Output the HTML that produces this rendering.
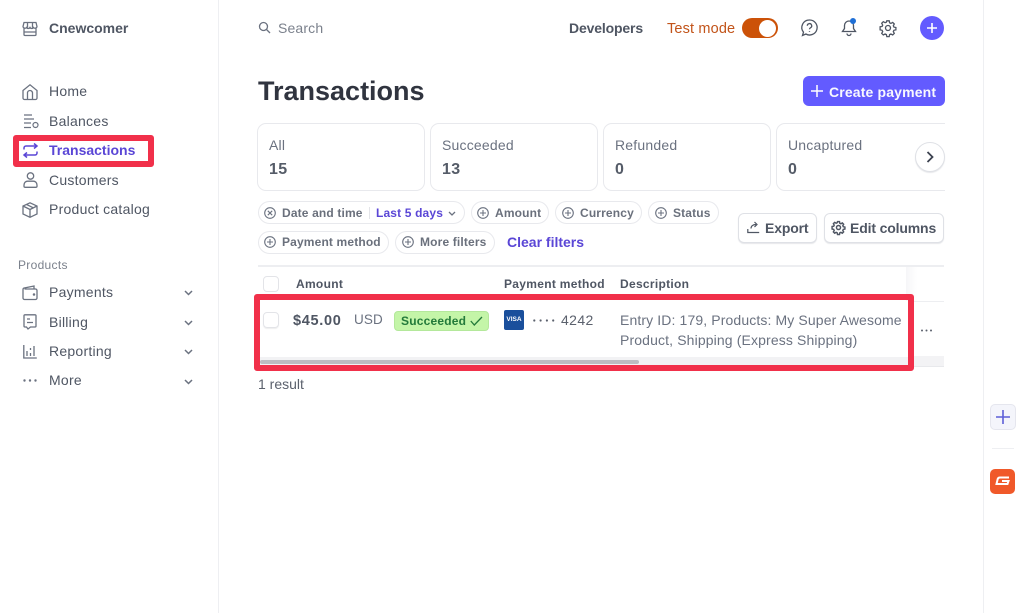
<!DOCTYPE html>
<html><head><meta charset="utf-8"><title>Transactions</title>
<style>
html,body{margin:0;padding:0;background:#fff;width:1024px;height:613px;overflow:hidden}
body{position:relative;font-family:"Liberation Sans",sans-serif;color:#4f566b}
.t{position:absolute;white-space:nowrap;line-height:18px;height:18px}
.b{position:absolute;box-sizing:border-box}
svg{position:absolute;overflow:visible;fill:none}
.nav{font-size:14px;color:#4f5663;letter-spacing:.25px}
.card{position:absolute;box-sizing:border-box;top:123px;height:68px;border:1.5px solid #e8e9ed;border-radius:9px;background:#fff}
.cl{font-size:14px;color:#6b7280;letter-spacing:.2px}
.cn{font-size:16px;font-weight:bold;color:#555c68;letter-spacing:.3px}
.pill{position:absolute;box-sizing:border-box;height:23px;border:1.5px solid #e8e9ed;border-radius:12px;background:#fff}
.f{font-size:12px;font-weight:bold;color:#6a707c;letter-spacing:.15px}
.th{font-size:12px;font-weight:bold;color:#4f5663;letter-spacing:.3px}
.btn{position:absolute;box-sizing:border-box;height:30px;top:213px;border:1.5px solid #dfe1e6;border-radius:6px;background:#fff;box-shadow:0 1px 1px #e6e7ea}
</style></head><body>
<div class="b" style="left:218px;top:0;width:1px;height:613px;background:#eeeff2"></div>
<div class="b" style="left:983px;top:0;width:1px;height:613px;background:#eeeff2"></div>

<svg style="left:22px;top:20px" width="16" height="17" viewBox="0 0 16 17" stroke="#6b7280" stroke-width="1.3"><path d="M2 2.500h12l1 4a2 2 0 0 1-3.500 1 2 2 0 0 1-3.500 0 2 2 0 0 1-3.500 0A2 2 0 0 1 1 6.500zM2 8v6.500a1 1 0 0 0 1 1h10a1 1 0 0 0 1-1V8M5.500 2.500v5M10.500 2.500v5M2 12h12"/></svg>
<div class="t" style="left:49px;top:19px;font-size:14px;font-weight:bold;color:#4f5663;letter-spacing:0">Cnewcomer</div>

<svg style="left:22px;top:84px" width="16" height="16" viewBox="0 0 16 16" stroke="#6b7280" stroke-width="1.300"><path d="M1 6.500 8 .8l7 5.700V14a1.500 1.500 0 0 1-1.500 1.500h-11A1.500 1.500 0 0 1 1 14zM5.500 15.500V9a2.500 2.500 0 0 1 5 0v6.500"/></svg>
<div class="t nav" style="left:49px;top:82px">Home</div>
<svg style="left:23px;top:114px" width="16" height="15" viewBox="0 0 16 15" stroke="#6b7280" stroke-width="1.200"><path d="M1 1h8M1 5h10M1 9h7M1 13.500h7"/><circle cx="12.500" cy="11" r="2.500"/></svg>
<div class="t nav" style="left:49px;top:112px">Balances</div>

<div class="b" style="left:13px;top:135px;width:141px;height:32px;border:6px solid #f1304a;border-radius:3px"></div>
<svg style="left:23px;top:143px" width="15" height="15" viewBox="0 0 15 15" stroke="#5a46d6" stroke-width="1.500"><path d="M1 6.500V5a2 2 0 0 1 2-2h11M11 .5 14 3l-3 2.500M14 8.500V10a2 2 0 0 1-2 2H1M4 9.500 1 12l3 2.500"/></svg>
<div class="t" style="left:49px;top:141px;font-size:14px;font-weight:bold;color:#5a46d6;letter-spacing:0">Transactions</div>

<svg style="left:23px;top:172px" width="15" height="16" viewBox="0 0 15 16" stroke="#6b7280" stroke-width="1.300"><circle cx="7.500" cy="4" r="3.200"/><path d="M1 13c0-2.500 2-3.800 3.500-3.800h6c1.500 0 3.500 1.300 3.500 3.800v1.300a1 1 0 0 1-1 1H2a1 1 0 0 1-1-1z"/></svg>
<div class="t nav" style="left:49px;top:171px">Customers</div>
<svg style="left:22px;top:202px" width="16" height="16" viewBox="0 0 16 16" stroke="#6b7280" stroke-width="1.300"><path d="M8 .8 15 4v8l-7 3.300L1 12V4zM1 4l7 3.500L15 4M8 7.500v7.800M4.500 2.400l7 3.500"/></svg>
<div class="t nav" style="left:49px;top:200px">Product catalog</div>

<div class="t" style="left:18px;top:256px;font-size:12px;color:#7b818c;letter-spacing:.3px">Products</div>
<svg style="left:22px;top:285px" width="16" height="15" viewBox="0 0 16 15" stroke="#6b7280" stroke-width="1.300"><path d="M1 4.500V13a1.500 1.500 0 0 0 1.500 1.500h11A1.500 1.500 0 0 0 15 13V5.500A1.500 1.500 0 0 0 13.500 4H2.500M1 4.500a1.500 1.500 0 0 1 1.200-1.500L12 1v3"/><circle cx="12" cy="9.500" r=".6"/></svg>
<div class="t nav" style="left:49px;top:283px">Payments</div>
<svg style="left:23px;top:314px" width="14" height="16" viewBox="0 0 14 16" stroke="#6b7280" stroke-width="1.300"><path d="M1 1.500A.8.800 0 0 1 1.800.8h10.400a.8.800 0 0 1 .8.700v10.500a1 1 0 0 1-1 1H7.500L5 15 3.500 13H2a1 1 0 0 1-1-1zM4 5h3M4 8.500h6"/></svg>
<div class="t nav" style="left:49px;top:313px">Billing</div>
<svg style="left:23px;top:344px" width="14" height="15" viewBox="0 0 14 15" stroke="#6b7280" stroke-width="1.300"><path d="M.8 1v13h13M4 7v5M7.500 9v3M7.500 4v2M11 2v10"/></svg>
<div class="t nav" style="left:49px;top:342px">Reporting</div>
<svg style="left:23px;top:379px" width="14" height="3" viewBox="0 0 14 3"><circle cx="1.500" cy="1.500" r="1.200" fill="#6b7280"/><circle cx="7" cy="1.500" r="1.200" fill="#6b7280"/><circle cx="12.500" cy="1.500" r="1.200" fill="#6b7280"/></svg>
<div class="t nav" style="left:49px;top:371px">More</div>
<svg style="left:184px;top:290px" width="9" height="6" stroke="#6b7280" stroke-width="1.500"><path d="M1 1l3.500 3.500L8 1"/></svg>
<svg style="left:184px;top:320px" width="9" height="6" stroke="#6b7280" stroke-width="1.500"><path d="M1 1l3.500 3.500L8 1"/></svg>
<svg style="left:184px;top:349px" width="9" height="6" stroke="#6b7280" stroke-width="1.500"><path d="M1 1l3.500 3.500L8 1"/></svg>
<svg style="left:184px;top:379px" width="9" height="6" stroke="#6b7280" stroke-width="1.500"><path d="M1 1l3.500 3.500L8 1"/></svg>

<svg style="left:258px;top:21px" width="13" height="13" viewBox="0 0 13 13" stroke="#6b7280" stroke-width="1.300"><circle cx="5.500" cy="5.500" r="4"/><path d="M8.500 8.500 12 12"/></svg>
<div class="t" style="left:278px;top:19px;font-size:14px;color:#7b818c;letter-spacing:.15px">Search</div>
<div class="t" style="left:569px;top:19px;font-size:14px;font-weight:bold;color:#4f5663;letter-spacing:-.15px">Developers</div>
<div class="t" style="left:667px;top:20px;font-size:14.500px;color:#c2541a;letter-spacing:.15px">Test mode</div>
<div class="b" style="left:742px;top:18px;width:36px;height:20px;border-radius:10px;background:#cc5208"></div>
<div class="b" style="left:759px;top:19.500px;width:17px;height:17px;border-radius:50%;background:#fff"></div>
<svg style="left:801px;top:19px" width="17" height="18" viewBox="0 0 17 18" stroke="#4f5663" stroke-width="1.300"><path d="M8.500 1a7.500 7.500 0 1 1-3.600 14L1.500 16.500l1-3.300A7.500 7.500 0 0 1 8.500 1z"/><path d="M6.300 6.800a2.200 2.200 0 1 1 3.300 1.900c-.7.400-1.100.8-1.100 1.600M8.500 12v.8"/></svg>
<svg style="left:841px;top:18px" width="17" height="18" viewBox="0 0 17 18" stroke="#4f5663" stroke-width="1.300"><path d="M8 3a4.500 4.500 0 0 0-4.500 4.500v3L1.500 13.500h13l-2-3v-3A4.500 4.500 0 0 0 8 3zM6 15.500a2 2 0 0 0 4 0"/></svg>
<div class="b" style="left:850px;top:18px;width:6px;height:6px;border-radius:50%;background:#1f6fd6"></div>
<svg style="left:880px;top:20px" width="16" height="16" viewBox="0 0 16 16" stroke="#4f5663" stroke-width="1.300"><circle cx="8" cy="8" r="2.500"/><path d="M6.800.8h2.400l.4 2 1.300.6 1.800-1 1.600 1.600-1 1.800.6 1.300 2 .4v2.400l-2 .4-.6 1.300 1 1.800-1.600 1.600-1.800-1-1.300.6-.4 2H6.800l-.4-2-1.300-.6-1.800 1-1.600-1.600 1-1.800-.6-1.300-2-.4V6.800l2-.4.600-1.300-1-1.800 1.600-1.600 1.800 1 1.300-.6z"/></svg>
<div class="b" style="left:920px;top:16px;width:24px;height:24px;border-radius:50%;background:#635bff"></div>
<svg style="left:926px;top:22px" width="12" height="12" stroke="#fff" stroke-width="1.600"><path d="M6 1v10M1 6h10"/></svg>

<div class="t" style="left:258px;top:74px;height:34px;line-height:34px;font-size:27px;font-weight:bold;color:#30343f;letter-spacing:0">Transactions</div>
<div class="b" style="left:803px;top:76px;width:142px;height:30px;border-radius:6px;background:#635bff"></div>
<svg style="left:811px;top:85px" width="12" height="12" stroke="#fff" stroke-width="1.500"><path d="M6 0v12M0 6h12"/></svg>
<div class="t" style="left:829px;top:83px;font-size:14px;font-weight:bold;color:#fff;letter-spacing:.15px;opacity:.96">Create payment</div>

<div class="card" style="left:257px;width:168px"></div>
<div class="t cl" style="left:269px;top:136px">All</div><div class="t cn" style="left:269px;top:161px">15</div>
<div class="card" style="left:430px;width:168px"></div>
<div class="t cl" style="left:442px;top:136px">Succeeded</div><div class="t cn" style="left:442px;top:161px">13</div>
<div class="card" style="left:603px;width:168px"></div>
<div class="t cl" style="left:615px;top:136px">Refunded</div><div class="t cn" style="left:615px;top:161px">0</div>
<div class="card" style="left:776px;width:190px"></div>
<div class="t cl" style="left:788px;top:136px">Uncaptured</div><div class="t cn" style="left:788px;top:161px">0</div>
<div class="b" style="left:945px;top:110px;width:38px;height:90px;background:#fff"></div>
<div class="b" style="left:915px;top:142px;width:30px;height:30px;border-radius:50%;background:#fff;border:1.500px solid #dfe1e6;box-shadow:0 1px 1px #e6e7ea"></div>
<svg style="left:926px;top:151px" width="8" height="12" stroke="#3c4250" stroke-width="1.800"><path d="M1.500 1l5 5-5 5"/></svg>

<div class="pill" style="left:258px;top:201px;width:207px"></div>
<svg style="left:264px;top:207px" width="12" height="12" stroke="#6b7280" stroke-width="1.100"><circle cx="6" cy="6" r="5.300"/><path d="M3.800 3.800l4.400 4.400M8.200 3.800 3.800 8.200"/></svg>
<div class="t f" style="left:282px;top:204px">Date and time</div>
<div class="b" style="left:369px;top:207px;width:1px;height:12px;background:#e3e4e8"></div>
<div class="t f" style="left:376px;top:204px;color:#5a46d6">Last 5 days</div>
<svg style="left:448px;top:211px" width="8" height="5" stroke="#6b7280" stroke-width="1.300"><path d="M1 1l3 3 3-3"/></svg>

<div class="pill" style="left:471px;top:201px;width:78px"></div>
<svg style="left:477px;top:207px" width="12" height="12" stroke="#6b7280" stroke-width="1.100"><circle cx="6" cy="6" r="5.300"/><path d="M6 3v6M3 6h6"/></svg>
<div class="t f" style="left:495px;top:204px">Amount</div>
<div class="pill" style="left:555px;top:201px;width:87px"></div>
<svg style="left:562px;top:207px" width="12" height="12" stroke="#6b7280" stroke-width="1.100"><circle cx="6" cy="6" r="5.300"/><path d="M6 3v6M3 6h6"/></svg>
<div class="t f" style="left:580px;top:204px">Currency</div>
<div class="pill" style="left:648px;top:201px;width:71px"></div>
<svg style="left:655px;top:207px" width="12" height="12" stroke="#6b7280" stroke-width="1.100"><circle cx="6" cy="6" r="5.300"/><path d="M6 3v6M3 6h6"/></svg>
<div class="t f" style="left:673px;top:204px">Status</div>
<div class="pill" style="left:258px;top:231px;width:131px"></div>
<svg style="left:264px;top:236px" width="12" height="12" stroke="#6b7280" stroke-width="1.100"><circle cx="6" cy="6" r="5.300"/><path d="M6 3v6M3 6h6"/></svg>
<div class="t f" style="left:282px;top:233px">Payment method</div>
<div class="pill" style="left:395px;top:231px;width:100px"></div>
<svg style="left:402px;top:236px" width="12" height="12" stroke="#6b7280" stroke-width="1.100"><circle cx="6" cy="6" r="5.300"/><path d="M6 3v6M3 6h6"/></svg>
<div class="t f" style="left:420px;top:233px">More filters</div>
<div class="t" style="left:507px;top:233px;font-size:14px;font-weight:bold;color:#5a46d6;letter-spacing:0">Clear filters</div>

<div class="btn" style="left:738px;width:79px"></div>
<svg style="left:747px;top:221px" width="13" height="13" viewBox="0 0 13 13" stroke="#4f5663" stroke-width="1.200"><path d="M.8 8v3.500h11.400M4 7.500c0-2.500 2-4 5-4M7.500 1 10 3.500 7.500 6"/></svg>
<div class="t" style="left:765px;top:219px;font-size:14px;font-weight:bold;color:#4f5663;letter-spacing:-.15px">Export</div>
<div class="btn" style="left:824px;width:120px"></div>
<svg style="left:832px;top:221px" width="13" height="13" viewBox="0 0 16 16" stroke="#4f5663" stroke-width="1.800"><circle cx="8" cy="8" r="2.500"/><path d="M6.800.8h2.400l.4 2 1.300.6 1.800-1 1.600 1.600-1 1.800.6 1.300 2 .4v2.400l-2 .4-.6 1.300 1 1.800-1.600 1.600-1.800-1-1.300.6-.4 2H6.800l-.4-2-1.300-.6-1.800 1-1.600-1.600 1-1.800-.6-1.300-2-.4V6.800l2-.4.600-1.300-1-1.800 1.600-1.600 1.800 1 1.300-.6z"/></svg>
<div class="t" style="left:850px;top:219px;font-size:14px;font-weight:bold;color:#4f5663;letter-spacing:-.15px">Edit columns</div>

<div class="b" style="left:258px;top:265px;width:686px;height:2px;background:#edeef1"></div>
<div class="b" style="left:906px;top:267px;width:38px;height:34px;background:linear-gradient(90deg,#f6f6f8,#fff 30%)"></div>
<div class="b" style="left:263px;top:276px;width:16px;height:16px;border:1.500px solid #e3e4e8;border-radius:4px"></div>
<div class="t th" style="left:296px;top:275px">Amount</div>
<div class="t th" style="left:504px;top:275px">Payment method</div>
<div class="t th" style="left:620px;top:275px">Description</div>

<div class="b" style="left:914px;top:301px;width:30px;height:1px;background:#edeef1"></div>
<div class="b" style="left:263px;top:312px;width:16px;height:16px;border:1.500px solid #e3e4e8;border-radius:4px;box-shadow:0 1px 1px #eee"></div>
<div class="t" style="left:293px;top:312px;font-size:14.500px;font-weight:bold;color:#4f5663;letter-spacing:.7px">$45.00</div>
<div class="t" style="left:354px;top:311px;font-size:13.500px;color:#6b7280;letter-spacing:.1px">USD</div>
<div class="b" style="left:394px;top:311px;width:95px;height:20px;border-radius:4px;background:#c4f5a8;border:1px solid #b4e89b"></div>
<div class="t" style="left:401px;top:312px;font-size:12px;font-weight:bold;color:#237a3a;letter-spacing:.2px">Succeeded</div>
<svg style="left:470px;top:316px" width="13" height="10" stroke="#237a3a" stroke-width="1.300"><path d="M.8 5l3.500 4L12 1"/></svg>
<div class="b" style="left:504px;top:310px;width:20px;height:20px;border-radius:2px;background:#1a4f9c"></div>
<div class="t" style="left:504px;top:311px;width:20px;text-align:center;font-size:6.500px;font-weight:bold;color:#fff">VISA</div>
<svg style="left:533px;top:319px" width="24" height="3" viewBox="0 0 24 3"><circle cx="1.300" cy="1.500" r="1.100" fill="#5b616d"/><circle cx="7.600" cy="1.500" r="1.100" fill="#5b616d"/><circle cx="13.900" cy="1.500" r="1.100" fill="#5b616d"/><circle cx="20.200" cy="1.500" r="1.100" fill="#5b616d"/></svg>
<div class="t" style="left:561px;top:311px;font-size:14px;color:#5b616d;letter-spacing:.4px">4242</div>
<div class="t" style="left:620px;top:311px;font-size:14px;color:#6b7280;letter-spacing:.12px">Entry ID: 179, Products: My Super Awesome</div>
<div class="t" style="left:620px;top:331px;font-size:14px;color:#6b7280;letter-spacing:.13px">Product, Shipping (Express Shipping)</div>
<svg style="left:921px;top:329px" width="11" height="3" viewBox="0 0 11 3"><circle cx="1" cy="1.500" r="1" fill="#5b616d"/><circle cx="5.500" cy="1.500" r="1" fill="#5b616d"/><circle cx="10" cy="1.500" r="1" fill="#5b616d"/></svg>

<div class="b" style="left:914px;top:356px;width:30px;height:11px;background:#f3f3f5;border-bottom:1px solid #e8e9ec"></div>
<div class="b" style="left:258px;top:357px;width:652px;height:9px;background:#f2f2f4"></div>
<div class="b" style="left:260px;top:360px;width:379px;height:4px;border-radius:2px;background:#bdbdc2"></div>
<div class="b" style="left:254px;top:294px;width:660px;height:77px;border:6px solid #f1304a;border-radius:3px"></div>
<div class="t" style="left:258px;top:375px;font-size:14px;color:#5b616d;letter-spacing:0">1 result</div>

<div class="b" style="left:990px;top:404px;width:26px;height:26px;border-radius:5px;background:#f4f5fb;border:1.500px solid #e5e6ee"></div>
<svg style="left:996px;top:410px" width="14" height="14" stroke="#5d5fd8" stroke-width="1.600"><path d="M7 0v14M0 7h14"/></svg>
<div class="b" style="left:992px;top:448px;width:22px;height:1px;background:#eeeff2"></div>
<div class="b" style="left:990px;top:469px;width:25px;height:25px;border-radius:5px;background:#f0592a"></div>
<svg style="left:995px;top:476px" width="15" height="10" viewBox="0 0 15 10" stroke="#fff" stroke-width="2"><path d="M14 1.500H5Q3.200 1.500 2.700 3L1.500 8H12.500L13.500 5H7"/></svg>
</body></html>
